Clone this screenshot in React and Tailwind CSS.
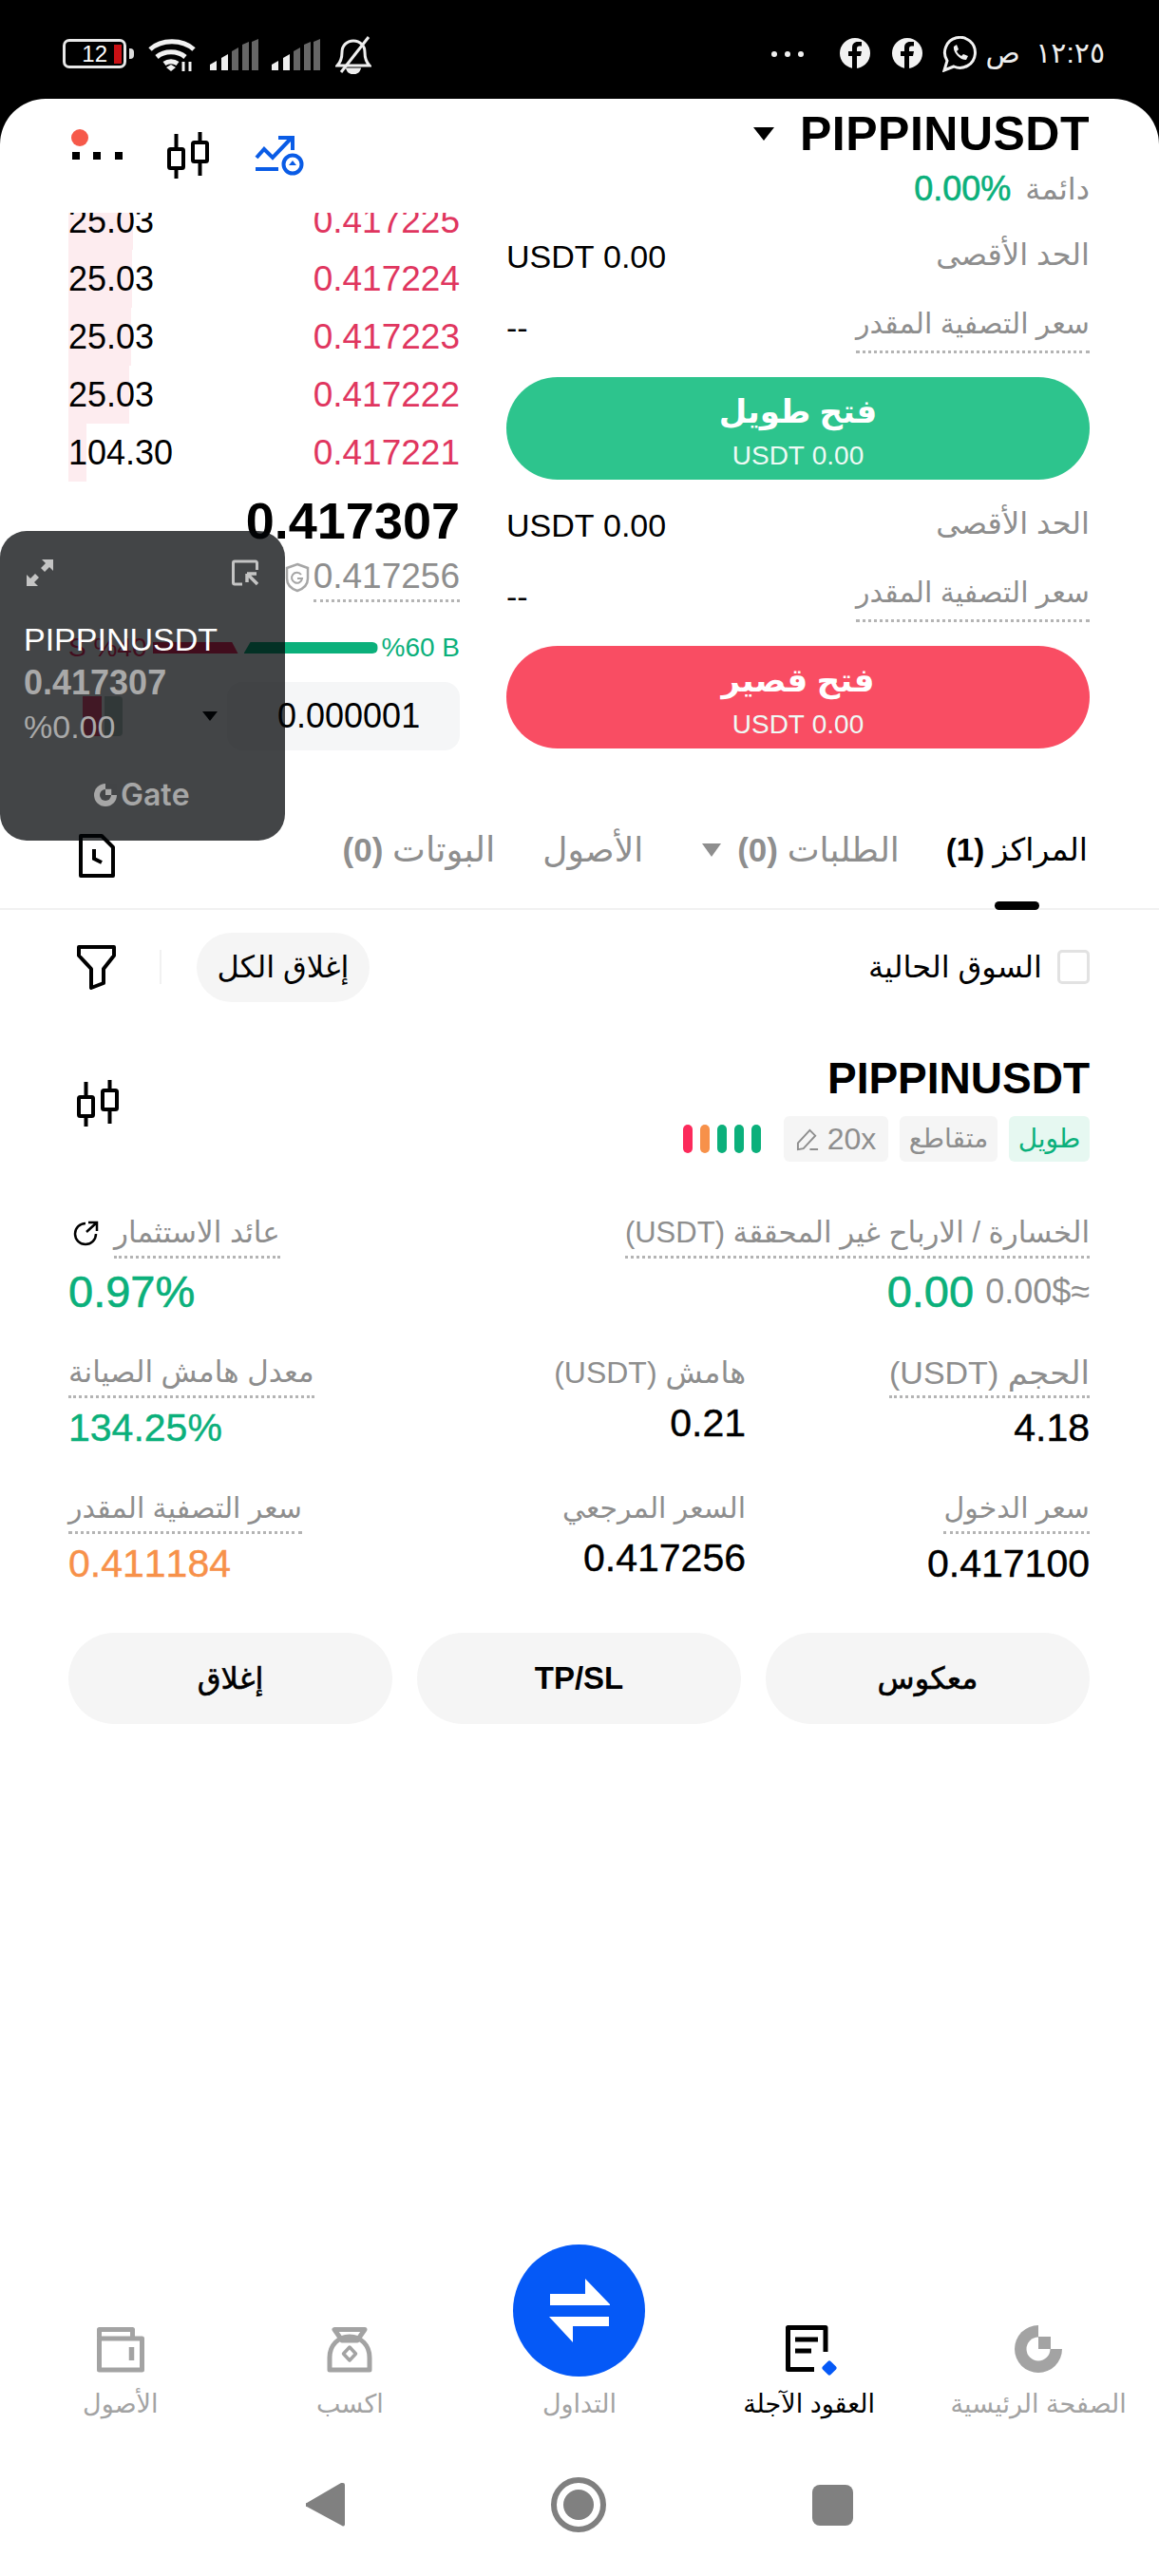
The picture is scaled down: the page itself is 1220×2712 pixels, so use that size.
import React from "react";

const GRAY = "text-[#8e8e8e]";

const Candles = ({ className = "" }) => (
  <svg viewBox="0 0 45 49" className={className} fill="none" stroke="#000" strokeWidth="4">
    <path d="M10.500 2v47M35.500 0v46" />
    <rect x="3" y="18" width="15" height="20" rx="1.500" fill="#fff" />
    <rect x="28" y="11" width="15" height="20" rx="1.500" fill="#fff" />
  </svg>
);

const GateMark = ({ color, cut = "#fff", className = "" }) => (
  <svg viewBox="0 0 50 50" className={className}>
    <circle cx="25" cy="25" r="25" fill={color} />
    <circle cx="25" cy="25" r="12.500" fill={cut} />
    <rect x="25" y="0" width="25" height="25" fill={cut} />
    <rect x="25" y="12" width="13" height="13" fill={color} />
  </svg>
);

const Signal = () => (
  <svg viewBox="0 0 51 33" className="w-[51px] h-[33px]">
    <path d="M0 27l7-4v10H0z" fill="#eee" />
    <path d="M12 20l7-4v17h-7z" fill="#eee" />
    <path d="M23 13l7-4v24h-7z" fill="#666" />
    <path d="M34 6l7-3v30h-7z" fill="#666" />
    <path d="M44 3l7-3v33h-7z" fill="#666" />
  </svg>
);

const Fb = () => (
  <svg viewBox="0 0 32 32" className="w-8 h-8">
    <circle cx="16" cy="16" r="16" fill="#f2f2f2" />
    <path d="M18 32V19h4l1-5h-5v-3c0-1.600.8-2.500 2.500-2.500H23V4h-4c-4 0-6 2.400-6 6v4H9v5h4v13z" fill="#000" />
  </svg>
);

const StatusBar = () => (
  <div className="h-[104px] flex justify-between pl-[66px] pr-[57px] pt-[37px] text-white">
    <div className="flex items-start gap-[15px]">
      <div className="flex items-center gap-[3px] mt-[4px]">
        <div className="w-[67px] h-[31px] border-[3px] border-[#e8e8e8] rounded-[7px] flex items-center justify-end pr-[2px] gap-[7px]">
          <span className="text-[24px] leading-none font-light">12</span>
          <span className="w-[8px] h-[20px] bg-[#c81014]" />
        </div>
        <span className="w-[5px] h-[11px] bg-[#ddd] rounded-r" />
      </div>
      <svg viewBox="0 0 50 36" className="w-[50px] h-[36px] mt-[3px]" fill="none" stroke="#f2f2f2" strokeWidth="5">
        <path d="M2 12C14 1 36 1 48 12" />
        <path d="M9 20c8-7 22-7 30 0" />
        <path d="M17 27c4-3 10-3 14 0" />
        <path d="m19 31 5-3 5 3-5 4z" fill="#f2f2f2" stroke="none" />
        <path d="M37 25v10M44 25v10" strokeWidth="3" />
      </svg>
      <div className="flex gap-[14px] mt-[4px]">
        <Signal />
        <Signal />
      </div>
      <svg viewBox="0 0 38 40" className="w-[38px] h-[40px] mt-[1px] ml-[1px]" fill="none" stroke="#eee" strokeWidth="3">
        <path d="M2 31h34c-4-4-5-8-5-14 0-7-5-12-12-12S7 10 7 17c0 6-1 10-5 14z" />
        <path d="M13 35h12c-2 5-10 5-12 0z" fill="#eee" />
        <path d="M35 1 6 38" />
      </svg>
    </div>
    <div className="flex items-start">
      <div className="flex gap-[8px] mt-[17px] mr-[38px]">
        <span className="w-[6px] h-[6px] rounded-full bg-[#eee]" />
        <span className="w-[6px] h-[6px] rounded-full bg-[#eee]" />
        <span className="w-[6px] h-[6px] rounded-full bg-[#eee]" />
      </div>
      <div className="flex gap-[23px] mt-[3px] mr-[21px]">
        <Fb />
        <Fb />
      </div>
      <svg viewBox="0 0 36 38" className="w-[36px] h-[38px] mt-[1px] mr-[10px]" fill="none" stroke="#f2f2f2" strokeWidth="3">
        <path d="M2 36l3-10A16 16 0 1 1 12 32z" />
        <path d="M12 11c-1 6 6 14 13 14l2-4-5-2-2 2c-2-1-4-3-5-5l2-2-2-5z" fill="#f2f2f2" stroke="none" />
      </svg>
      <span dir="rtl" className="text-[30px] leading-[38px] text-[#eee] whitespace-nowrap [word-spacing:8px]">١٢:٢٥ ص</span>
    </div>
  </div>
);

const Header = () => (
  <div className="h-[120px] flex justify-between pl-[75px] pr-[73px]">
    <div className="flex items-start">
      <div className="relative w-[56px] h-[62px] mt-[56px]">
        <span className="absolute left-[1px] top-0 w-[8px] h-[8px] bg-black" />
        <span className="absolute left-[23px] top-0 w-[8px] h-[8px] bg-black" />
        <span className="absolute left-[46px] top-0 w-[8px] h-[8px] bg-black" />
        <span className="absolute left-0 -top-[24px] w-[18px] h-[18px] rounded-full bg-[#f6594a]" />
      </div>
      <Candles className="w-[45px] h-[49px] ml-[44px] mt-[35px]" />
      <svg viewBox="0 0 52 42" className="w-[52px] h-[42px] ml-[48px] mt-[39px]" fill="none" stroke="#0a5ce6" strokeWidth="4">
        <path d="M2 23l8-9 9 9L38 3" />
        <path d="M25 2h15v13" />
        <path d="M1 35h24" />
        <circle cx="40" cy="30" r="9.500" />
        <path d="m40 26 4 5h-8z" fill="#0a5ce6" stroke="none" />
      </svg>
    </div>
    <div className="flex flex-col items-end">
      <div className="flex items-center h-[46px] mt-[14px] gap-[27px]">
        <span className="w-0 h-0 border-x-[11px] border-x-transparent border-t-[14px] border-t-black" />
        <span className="text-[50px] leading-[46px] font-bold text-black [letter-spacing:0.5px]">PIPPINUSDT</span>
      </div>
      <div className="flex items-center h-[30px] mt-[20px] gap-[15px]">
        <span className="text-[36px] text-[#0bb07b] [-webkit-text-stroke:0.6px_#0bb07b]">0.00%</span>
        <span className={`text-[32px] ${GRAY}`}>دائمة</span>
      </div>
    </div>
  </div>
);

const ASKS = [
  { size: "25.03", price: "0.417225", bar: "w-[68px]" },
  { size: "25.03", price: "0.417224", bar: "w-[67px]" },
  { size: "25.03", price: "0.417223", bar: "w-[66px]" },
  { size: "25.03", price: "0.417222", bar: "w-[64px]" },
  { size: "104.30", price: "0.417221", bar: "w-[19px]" },
];

const OrderBook = () => (
  <div className="w-[412px] flex flex-col">
    <div className="h-[283px] overflow-hidden">
      <div className="-mt-[22px]">
        {ASKS.map((a) => (
          <div key={a.price} className="relative h-[61px] flex items-center justify-between">
            <span className={`absolute left-0 top-0 bottom-0 bg-[#fdecef] ${a.bar}`} />
            <span className="relative text-[36px] text-black">{a.size}</span>
            <span className="relative text-[37px] text-[#e0365f]">{a.price}</span>
          </div>
        ))}
      </div>
    </div>
    <div className="mt-[11px] h-[60px] flex items-center justify-end text-[54px] leading-none font-bold text-black">0.417307</div>
    <div className="mt-[7px] flex items-start justify-end">
      <svg viewBox="0 0 26 32" className="w-[26px] h-[32px] mt-[7px] mr-[4px]" fill="none" stroke="#a6a6a6" strokeWidth="2.500">
        <path d="M13 2 24 6v11c0 7-5 11-11 13C7 28 2 24 2 17V6z" />
        <path d="M17 13a5.500 5.500 0 1 0 1 4h-5" strokeWidth="2" />
      </svg>
      <span className={`text-[37px] leading-[44px] pb-[2px] border-b-[3px] border-dotted border-[#b4b4b4] ${GRAY}`}>0.417256</span>
    </div>
    <div className="mt-[32px] h-[32px] flex items-center text-[28px]">
      <span className="text-[#f5295c]">S %40</span>
      <span className="ml-[6px] w-[90px] h-[12px] bg-[#f5295c] [clip-path:polygon(0_0,93%_0,100%_100%,0_100%)]" />
      <span className="ml-[6px] w-[141px] h-[12px] bg-[#0bb07b] rounded-r-full [clip-path:polygon(5%_0,100%_0,100%_100%,0_100%)]" />
      <span className="ml-auto text-[#0bb07b]">%60 B</span>
    </div>
    <div className="mt-[20px] h-[72px] flex items-center">
      <span className="ml-[15px] w-[20px] h-[42px] bg-[#f5295c]/80" />
      <span className="ml-[3px] w-[19px] h-[42px] bg-[#b9ccc6] rounded-r" />
      <span className="ml-[84px] w-0 h-0 border-x-[8px] border-x-transparent border-t-[10px] border-t-black" />
      <div className="ml-[10px] flex-1 h-[72px] rounded-[16px] bg-[#f5f6f7] flex items-center pl-[53px] text-[36px] text-black">0.000001</div>
    </div>
  </div>
);

const TradeBox = ({ title, color }) => (
  <>
    <div className="h-[72px] flex items-center justify-between">
      <span className="text-[34px] text-black mt-[4px]">USDT 0.00</span>
      <span className={`text-[32px] ${GRAY}`}>الحد الأقصى</span>
    </div>
    <div className="mt-[14px] flex justify-between items-start">
      <span className="text-[34px] leading-[46px] mt-[4px] text-black">--</span>
      <span className={`text-[30px] leading-[46px] pb-[5px] border-b-[3px] border-dotted border-[#b4b4b4] ${GRAY}`}>سعر التصفية المقدر</span>
    </div>
    <div className={`mt-[25px] h-[108px] rounded-full flex flex-col items-center text-white ${color}`}>
      <span dir="rtl" className="text-[34px] leading-[46px] font-bold mt-[13px]">{title}</span>
      <span className="text-[28px] leading-[32px] mt-[8px] text-[#eefaf5]">USDT 0.00</span>
    </div>
  </>
);

const FloatingWindow = () => (
  <div className="absolute left-0 top-[455px] w-[300px] h-[326px] rounded-[28px] bg-[rgba(1,4,7,0.74)] flex flex-col pl-[25px] pr-[28px]">
    <div className="flex justify-between mt-[30px] pl-[3px]">
      <svg viewBox="0 0 28 28" className="w-[28px] h-[28px]" fill="#c4c4c4">
        <path d="M16 0h12v12l-4-4-5 5-4-4 5-5zM12 28H0V16l4 4 5-5 4 4-5 5z" />
      </svg>
      <svg viewBox="0 0 28 28" className="w-[28px] h-[28px]" fill="none" stroke="#c4c4c4" strokeWidth="3">
        <path d="M11 26H3a1.500 1.500 0 0 1-1.500-1.500v-21A1.500 1.500 0 0 1 3 2h22a1.500 1.500 0 0 1 1.500 1.500V11" />
        <path d="M16 15h10M16 15v9M17 16l10 10" strokeWidth="3.500" />
      </svg>
    </div>
    <div className="text-[34px] leading-[40px] text-white mt-[36px]">PIPPINUSDT</div>
    <div className="text-[36px] leading-[40px] font-bold text-[#a9a9a9] mt-[6px]">0.417307</div>
    <div className="text-[34px] leading-[40px] text-[#a9a9a9] mt-[6px]">%0.00</div>
    <div className="flex items-center mt-[40px] ml-[74px] gap-[4px]">
      <GateMark color="#a6a6a6" cut="#424446" className="w-[24px] h-[24px]" />
      <span className="[font-family:Inter,sans-serif] text-[32px] leading-[24px] font-semibold text-[#a6a6a6]">Gate</span>
    </div>
  </div>
);

const Tabs = () => (
  <div className="relative h-[108px] flex items-center justify-between pl-[83px] pr-[75px] border-b-2 border-[#f1f1f1]">
    <svg viewBox="0 0 38 46" className="w-[38px] h-[46px] mt-[-4px]" fill="none" stroke="#000" strokeWidth="4">
      <path d="M2 2h22l12 12v30H2z" strokeLinejoin="round" />
      <path d="M16 16v10l8 4" />
    </svg>
    <div dir="ltr" className="flex items-center text-[35px] h-[60px] mt-[-16px]">
      <span dir="rtl" className={`font-bold ${GRAY} [&>i]:font-normal [&>i]:not-italic [&>i]:text-[37px]`}><i>البوتات</i> (0)</span>
      <span className={`ml-[50px] text-[36px] ${GRAY}`}>الأصول</span>
      <span className="ml-[62px] w-0 h-0 border-x-[10px] border-x-transparent border-t-[14px] border-t-[#8e8e8e]" />
      <span dir="rtl" className={`ml-[17px] font-bold ${GRAY} [&>i]:font-normal [&>i]:not-italic [&>i]:text-[36px]`}><i>الطلبات</i> (0)</span>
      <span dir="rtl" className="ml-[49px] text-[33px] font-bold text-black [&>i]:font-normal [&>i]:not-italic"><i>المراكز</i> (1)</span>
    </div>
    <span className="absolute right-[126px] bottom-[-2px] w-[47px] h-[9px] rounded-full bg-black" />
  </div>
);

const FilterRow = () => (
  <div className="h-[116px] flex items-center justify-between pl-[81px] pr-[73px] pt-[4px]">
    <div className="flex items-center">
      <svg viewBox="0 0 41 47" className="w-[41px] h-[47px]" fill="none" stroke="#000" strokeWidth="4">
        <path d="M2 2h37v9L28 25v15l-13 5V25L2 11z" strokeLinejoin="round" />
      </svg>
      <span className="ml-[46px] w-[2px] h-[36px] bg-[#f1f1f1]" />
      <span className="ml-[37px] w-[182px] h-[73px] rounded-full bg-[#f5f5f5] flex items-center justify-center text-[32px] text-black">إغلاق الكل</span>
    </div>
    <div className="flex items-center gap-[16px]">
      <span className="text-[32px] text-black">السوق الحالية</span>
      <span className="w-[34px] h-[36px] rounded-[5px] border-[3px] border-[#e2e2e2]" />
    </div>
  </div>
);

const Stat = ({ label, value, dotted = true, align = "items-end", offset = "mt-[9px]", size = "text-[31px]" }) => (
  <div className={`flex flex-col ${align}`}>
    <span dir="rtl" className={`${size} leading-[44px] h-[49px] ${dotted ? "border-b-[3px] border-dotted border-[#b4b4b4]" : ""} ${GRAY} whitespace-nowrap`}>{label}</span>
    <div className={offset}>{value}</div>
  </div>
);

const Num = ({ children, className }) => <span className={`block text-[41px] leading-[48px] [-webkit-text-stroke:0.4px] ${className}`}>{children}</span>;

const Position = () => (
  <div className="pl-[72px] pr-[73px]">
    <div className="flex justify-between mt-[35px]">
      <Candles className="w-[45px] h-[49px] ml-[8px] mt-[28px]" />
      <div className="flex flex-col items-end">
        <span className="text-[46px] leading-[52px] font-bold text-black">PIPPINUSDT</span>
        <div className="flex items-center mt-[14px] h-[48px]">
          <div className="flex gap-[8px] mr-[24px]">
            <span className="w-[10px] h-[30px] rounded-full bg-[#fc2a5b]" />
            <span className="w-[10px] h-[30px] rounded-full bg-[#f7914a]" />
            <span className="w-[10px] h-[30px] rounded-full bg-[#0bb07b]" />
            <span className="w-[10px] h-[30px] rounded-full bg-[#0bb07b]" />
            <span className="w-[10px] h-[30px] rounded-full bg-[#0bb07b]" />
          </div>
          <span className={`h-[48px] w-[110px] rounded-[6px] bg-[#f5f5f5] flex items-center justify-center gap-[8px] text-[32px] ${GRAY}`}>
            <svg viewBox="0 0 26 26" className="w-[25px] h-[25px]" fill="none" stroke="#8e8e8e" strokeWidth="2">
              <path d="M2 24V17L15 3l6 6L8 23zM15 24h9" />
            </svg>
            20x
          </span>
          <span className={`ml-[12px] h-[48px] w-[103px] rounded-[6px] bg-[#f5f5f5] flex items-center justify-center text-[28px] ${GRAY}`}>متقاطع</span>
          <span className="ml-[12px] h-[48px] w-[85px] rounded-[6px] bg-[#e6f8f1] flex items-center justify-center text-[28px] text-[#0bb07b]">طويل</span>
        </div>
      </div>
    </div>

    <div className="flex justify-between mt-[53px]">
      <div className="flex flex-col items-start">
        <div className="flex items-start ml-[4px]">
          <svg viewBox="0 0 28 28" className="w-[28px] h-[28px] mt-[8px] mr-[16px]" fill="none" stroke="#000" strokeWidth="2.500">
            <path d="M14 4a11 11 0 1 0 11 11" />
            <path d="M17 3h9v9M26 3 15 13" />
          </svg>
          <span className={`text-[31px] leading-[44px] h-[49px] border-b-[3px] border-dotted border-[#b4b4b4] ${GRAY}`}>عائد الاستثمار</span>
        </div>
        <span className="text-[47px] leading-[56px] mt-[7px] text-[#0bb07b] [-webkit-text-stroke:0.6px_#0bb07b]">0.97%</span>
      </div>
      <div className="flex flex-col items-end">
        <span dir="rtl" className={`text-[31px] leading-[44px] h-[49px] border-b-[3px] border-dotted border-[#b4b4b4] ${GRAY}`}>الخسارة / الارباح غير المحققة (USDT)</span>
        <div className="flex items-center mt-[7px] h-[56px] gap-[12px]">
          <span className="text-[47px] text-[#0bb07b] [-webkit-text-stroke:0.6px_#0bb07b]">0.00</span>
          <span className={`text-[36px] ${GRAY}`}>0.00$≈</span>
        </div>
      </div>
    </div>

    <div className="grid grid-cols-[1fr_1fr_362px] mt-[35px]">
      <Stat label="معدل هامش الصيانة" align="items-start" offset="mt-[7px]" value={<Num className="text-[#0bb07b]">134.25%</Num>} />
      <Stat label="هامش (USDT)" size="text-[32px]" dotted={false} offset="mt-[2px]" value={<Num className="text-black">0.21</Num>} />
      <Stat label="الحجم (USDT)" size="text-[34px]" offset="mt-[7px]" value={<Num className="text-black">4.18</Num>} />
    </div>

    <div className="grid grid-cols-[1fr_1fr_362px] mt-[39px]">
      <Stat label="سعر التصفية المقدر" size="text-[30px]" align="items-start" offset="mt-[7px]" value={<Num className="text-[#f7914a]">0.411184</Num>} />
      <Stat label="السعر المرجعي" size="text-[30px]" dotted={false} offset="mt-[1px]" value={<Num className="text-black">0.417256</Num>} />
      <Stat label="سعر الدخول" size="text-[30px]" offset="mt-[7px]" value={<Num className="text-black">0.417100</Num>} />
    </div>

    <div className="grid grid-cols-3 gap-[26px] mt-[49px]">
      <button className="h-[96px] rounded-full bg-[#f5f5f5] text-[32px] text-black [-webkit-text-stroke:0.6px_#000]">إغلاق</button>
      <button className="h-[96px] rounded-full bg-[#f5f5f5] text-[33px] font-bold text-black">TP/SL</button>
      <button className="h-[96px] rounded-full bg-[#f5f5f5] text-[32px] text-black [-webkit-text-stroke:0.6px_#000]">معكوس</button>
    </div>
  </div>
);

const NavItem = ({ label, active, children }) => (
  <div className="flex flex-col items-center justify-end">
    {children}
    <span className={`mt-[15px] text-[27px] leading-[36px] whitespace-nowrap ${active ? "text-black" : "text-[#a3a3a3]"}`}>{label}</span>
  </div>
);

const BottomNav = () => (
  <div className="grid grid-cols-5 px-[6px] h-[199px] pb-[11px]">
    <NavItem label="الأصول">
      <svg viewBox="0 0 50 49" className="w-[50px] h-[49px]" fill="none" stroke="#a3a3a3" strokeWidth="5" strokeLinejoin="round">
        <path d="M2.500 12V3.500h35V12" />
        <path d="M2.500 13h45v33h-45z" />
        <path d="M36.500 22v14" strokeWidth="5.500" />
      </svg>
    </NavItem>
    <NavItem label="اكسب">
      <svg viewBox="0 0 48 49" className="w-[48px] h-[49px]" fill="none" stroke="#a3a3a3" strokeWidth="5" strokeLinejoin="round">
        <path d="M8 3.500h32L32 15H16z" />
        <path d="M3 46V33C3 20 12 11 24 11s21 9 21 22v13z" />
        <path d="m24 22 6.500 7-6.500 7-6.500-7z" strokeWidth="3.500" />
      </svg>
    </NavItem>
    <NavItem label="التداول">
      <div className="w-[139px] h-[139px] rounded-full bg-[#0559f7] flex items-center justify-center mb-[-4px]">
        <svg viewBox="0 0 64 68" className="w-[64px] h-[68px]" fill="#fff">
          <path d="M38 0l26 27v1H1V16h37zM0 40h63v10H25v17z" />
        </svg>
      </div>
    </NavItem>
    <NavItem label="العقود الآجلة" active>
      <div className="relative w-[50px] h-[50px]">
        <svg viewBox="0 0 50 50" className="w-[50px] h-[50px]" fill="none" stroke="#000" strokeWidth="5" strokeLinejoin="round">
          <path d="M30 46.500H2.500v-44H42V28" />
          <path d="M10 15h24M10 27h17" />
        </svg>
        <span className="absolute right-[-2px] bottom-[-1px] w-[12px] h-[12px] rotate-45 rounded-[2px] bg-[#0559f7]" />
      </div>
    </NavItem>
    <NavItem label="الصفحة الرئيسية">
      <GateMark color="#a3a3a3" className="w-[50px] h-[50px]" />
    </NavItem>
  </div>
);

const AndroidBar = () => (
  <div className="h-[152px] flex items-start justify-center pt-[48px]">
    <div className="w-[576px] flex items-center justify-between">
      <svg viewBox="0 0 41 48" className="w-[41px] h-[48px]">
        <path d="M39 1a2 2 0 0 1 2 2v42a2 2 0 0 1-3 1L1 26a2 2 0 0 1 0-4L37 1z" fill="#808080" />
      </svg>
      <span className="w-[58px] h-[58px] rounded-full border-[6px] border-[#808080] flex items-center justify-center">
        <span className="w-[32px] h-[32px] rounded-full bg-[#808080]" />
      </span>
      <span className="w-[43px] h-[43px] rounded-[8px] bg-[#808080]" />
    </div>
  </div>
);

export default function App() {
  return (
    <div className="w-[1220px] h-[2712px] bg-black flex flex-col overflow-hidden [font-kerning:none] [font-family:'Liberation_Sans','DejaVu_Sans',sans-serif]">
      <StatusBar />
      <div className="relative flex-1 bg-white rounded-t-[48px] flex flex-col">
        <Header />
        <div className="h-[626px] flex justify-between pl-[72px] pr-[73px]">
          <OrderBook />
          <div className="w-[614px] pt-[8px]">
            <TradeBox title="فتح طويل" color="bg-[#2dc48d]" />
            <div className="mt-[10px]">
              <TradeBox title="فتح قصير" color="bg-[#f94d63]" />
            </div>
          </div>
        </div>
        <Tabs />
        <FilterRow />
        <Position />
        <div className="flex-1" />
        <BottomNav />
        <AndroidBar />
        <FloatingWindow />
      </div>
    </div>
  );
}
